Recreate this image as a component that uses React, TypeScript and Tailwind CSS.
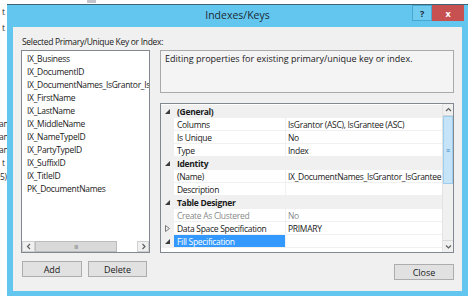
import React from "react";

type Row = {
  kind: "cat" | "prop";
  name: string;
  value?: string;
  glyph?: "open" | "closed";
  muted?: boolean;
  selected?: boolean;
};

const rows: Row[] = [
  { kind: "cat", name: "(General)", glyph: "open" },
  { kind: "prop", name: "Columns", value: "IsGrantor (ASC), IsGrantee (ASC)" },
  { kind: "prop", name: "Is Unique", value: "No" },
  { kind: "prop", name: "Type", value: "Index" },
  { kind: "cat", name: "Identity", glyph: "open" },
  { kind: "prop", name: "(Name)", value: "IX_DocumentNames_IsGrantor_IsGrantee" },
  { kind: "prop", name: "Description", value: "" },
  { kind: "cat", name: "Table Designer", glyph: "open" },
  { kind: "prop", name: "Create As Clustered", value: "No", muted: true },
  { kind: "prop", name: "Data Space Specification", value: "PRIMARY", glyph: "closed" },
  { kind: "prop", name: "Fill Specification", value: "", glyph: "open", selected: true },
];

const keys = [
  "IX_Business",
  "IX_DocumentID",
  "IX_DocumentNames_IsGrantor_IsGrantee",
  "IX_FirstName",
  "IX_LastName",
  "IX_MiddleName",
  "IX_NameTypeID",
  "IX_PartyTypeID",
  "IX_SuffixID",
  "IX_TitleID",
  "PK_DocumentNames",
];

function Glyph({ type }: { type?: "open" | "closed" }) {
  if (type === "open")
    return (
      <svg width="5" height="5" viewBox="0 0 5 5">
        <polygon points="5,0 5,5 0,5" fill="#3c3c3c" />
      </svg>
    );
  if (type === "closed")
    return (
      <svg width="5" height="7" viewBox="0 0 5 7">
        <polygon points="0.5,0.5 4.5,3.5 0.5,6.5" fill="none" stroke="#7a7a7a" strokeWidth="1" />
      </svg>
    );
  return null;
}

function Chevron({ dir }: { dir: "up" | "down" | "left" | "right" }) {
  const pts = {
    up: "1,4 3.5,1.5 6,4",
    down: "1,1.5 3.5,4 6,1.5",
    left: "4,1 1.5,3.5 4,6",
    right: "1.5,1 4,3.5 1.5,6",
  }[dir];
  const w = dir === "up" || dir === "down" ? 7 : 5;
  const h = dir === "up" || dir === "down" ? 5 : 7;
  return (
    <svg width={w} height={h} viewBox={`0 0 ${w} ${h}`}>
      <polyline points={pts} fill="none" stroke="#606060" strokeWidth="1.2" />
    </svg>
  );
}

function Button({ label, className }: { label: string; className?: string }) {
  return (
    <div
      className={`h-[16px] flex items-center justify-center bg-[#e1e1e1] border border-[#adadad] text-[#1a1a1a] text-[9px] tracking-normal ${className ?? "w-[60px]"}`}
    >
      {label}
    </div>
  );
}

export default function App() {
  return (
    <div className="relative w-[474px] h-[306px] bg-white overflow-hidden font-['Open_Sans',sans-serif] text-[8.5px] leading-[13px] tracking-[-0.3px]">
      {/* desktop behind the dialog */}
      <div className="flex items-start">
        <div className="w-[30px] text-[#2a2a2a] whitespace-nowrap">
          <div className="pt-[5px] pl-[2px]">t</div>
          <div className="mt-[3px] pl-[2px]">t</div>
          <div className="mt-[83px] -ml-[1px]">an</div>
          <div className="-ml-[1px]">an</div>
          <div className="-ml-[1px]">an</div>
          <div className="pl-[2px]">t</div>
          <div className="mt-[1px]">5)</div>
        </div>
        <div className="ml-[57px] w-[9px] h-[3px] bg-[#c4c4cc]" />
      </div>

      {/* dialog window */}
      <div className="absolute left-[7px] top-[4px] w-[461px] h-[292px] flex flex-col bg-[#62c6ee] border-t border-[#3b6476]">
        {/* title bar */}
        <div className="relative h-[22px] flex items-center justify-center">
          <span className="text-[10.5px] leading-[14px] -mt-[3px] tracking-normal text-[#1e2a33]">Indexes/Keys</span>
          <div className="absolute right-[4px] top-0 flex">
            <div className="w-[20px] h-[16px] flex items-center justify-center bg-[#6fcbf0] border border-[#4aa7d1] text-[#1d2a33] font-bold text-[9px]">
              ?
            </div>
            <div className="w-[32px] h-[16px] flex items-center justify-center bg-[#c75050] text-white font-bold text-[9px]">
              x
            </div>
          </div>
        </div>

        {/* client area */}
        <div className="mx-[6px] mb-[5px] flex-1 min-w-0 bg-[#f0f0f0] flex px-[8px] text-[#1a1a1a]">
          {/* left column */}
          <div className="w-[129px] shrink-0 flex flex-col">
            <div className="pt-[8px] pl-[1px] h-[23px] whitespace-nowrap">Selected Primary/Unique Key or Index:</div>
            <div className="h-[203px] bg-white border border-[#828790] flex flex-col">
              <div className="flex-1 pt-[1px] pl-[5px] overflow-hidden whitespace-nowrap">
                {keys.map((k) => (
                  <div key={k} className="h-[13px]">
                    {k}
                  </div>
                ))}
              </div>
              <div className="h-[11px] flex bg-[#f0f0f0]">
                <div className="w-[13px] flex items-center justify-center border border-[#d0d0d0]">
                  <Chevron dir="left" />
                </div>
                <div className="w-[82px] flex items-center justify-center bg-[#d9d9d9] border border-[#bcbcbc] text-[#6a6a6a] text-[6px] leading-[6px] tracking-[-0.5px]">
                  III
                </div>
                <div className="flex-1 bg-white" />
                <div className="w-[12px] flex items-center justify-center border border-[#d0d0d0]">
                  <Chevron dir="right" />
                </div>
              </div>
            </div>
            <div className="mt-[8px] pl-[1px] flex gap-[6px]">
              <Button label="Add" />
              <Button label="Delete" className="w-[59px]" />
            </div>
          </div>

          {/* right column */}
          <div className="ml-[10px] flex-1 min-w-0 flex flex-col pt-[23px]">
            <div className="h-[43px] bg-[#f5f4f5] border border-[#a9a9a9] pl-[4px] pt-[1px] text-[9px] tracking-normal">
              Editing properties for existing primary/unique key or index.
            </div>
            <div className="mt-[10px] h-[150px] bg-white border border-[#828790] flex">
              <div className="flex-1 min-w-0 flex flex-col pt-[1px]">
                {rows.map((r) => (
                  <div key={r.name} className="h-[13px] flex">
                    <div className="w-[13px] shrink-0 flex items-center justify-center bg-[#f0f0f0]">
                      <Glyph type={r.glyph} />
                    </div>
                    {r.kind === "cat" ? (
                      <div className="flex-1 bg-[#f0f0f0] pl-[3px] font-bold">{r.name}</div>
                    ) : (
                      <>
                        <div
                          className={`w-[112px] shrink-0 border-r border-b border-[#f0f0f0] whitespace-nowrap overflow-hidden pl-[3px] ${
                            r.selected ? "bg-[#3399ff] text-white" : ""
                          } ${r.muted ? "text-[#8a8a8a]" : ""}`}
                        >
                          {r.name}
                        </div>
                        <div
                          className={`flex-1 min-w-0 pl-[2px] border-b border-[#f0f0f0] whitespace-nowrap overflow-hidden ${
                            r.muted ? "text-[#8a8a8a]" : ""
                          }`}
                        >
                          {r.value}
                        </div>
                      </>
                    )}
                  </div>
                ))}
              </div>
              <div className="w-[11px] shrink-0 flex flex-col bg-[#f0f0f0] border-l border-[#e3e3e3]">
                <div className="h-[12px] flex items-center justify-center border-b border-[#d8d8d8]">
                  <Chevron dir="up" />
                </div>
                <div className="h-[68px] flex items-center justify-center bg-[#c6e4f7] border border-[#9fcdee] text-[#3a86c6] text-[7px] leading-[7px]">
                  ≡
                </div>
                <div className="flex-1" />
                <div className="h-[12px] flex items-center justify-center border-t border-[#d8d8d8]">
                  <Chevron dir="down" />
                </div>
              </div>
            </div>
            <div className="mt-[11px] flex justify-end">
              <Button label="Close" />
            </div>
          </div>
        </div>
      </div>
    </div>
  );
}
